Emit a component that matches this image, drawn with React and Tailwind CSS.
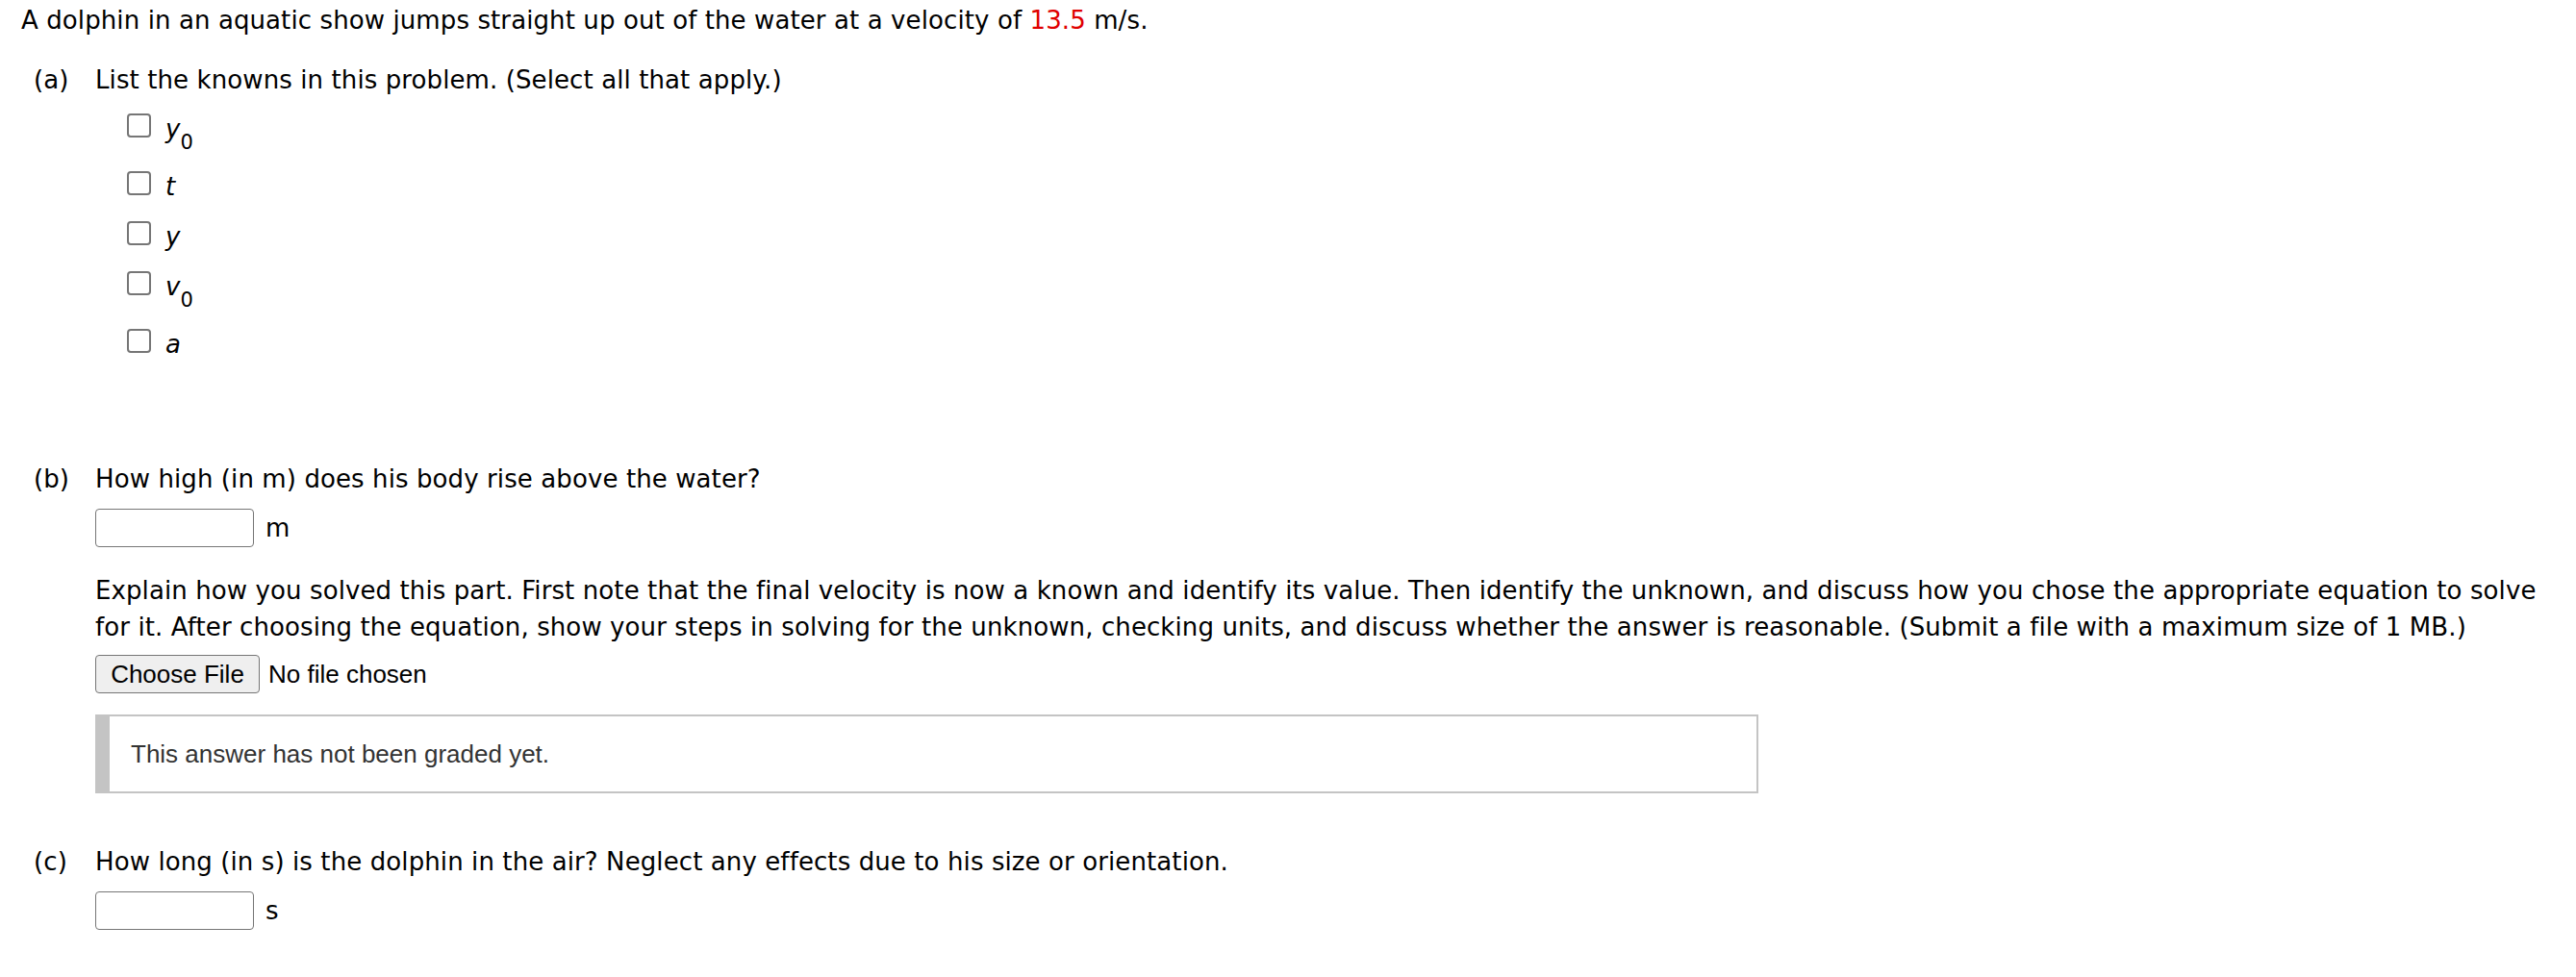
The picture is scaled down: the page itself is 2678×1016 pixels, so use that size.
import React from "react";

const Part = ({ label, children, className = "" }) => (
  <div className={`flex pl-[13px] ${className}`}>
    <div className="w-[64px] shrink-0 leading-[36px]">{label}</div>
    <div className="flex-1 min-w-0">{children}</div>
  </div>
);

const Known = ({ name, sub }) => (
  <div className={`flex items-start pl-[33px] ${sub ? "h-[60px]" : "h-[52px]"}`}>
    <div className="mt-[10px] w-[25px] h-[25px] shrink-0 rounded-[4px] border-2 border-[#767676] bg-white" />
    <span className="ml-[15px] leading-[52px] italic">
      {name}
      {sub && <span className="not-italic text-[21px] leading-none align-[-12px]">{sub}</span>}
    </span>
  </div>
);

const AnswerBox = ({ unit }) => (
  <div className="flex items-center mt-[13px]">
    <input
      type="text"
      className="w-[165px] h-[40px] rounded-[4px] border-[1.5px] border-[#767676] bg-white px-2 outline-none"
    />
    <span className="ml-[12px]">{unit}</span>
  </div>
);

export default function App() {
  return (
    <div className="min-h-screen bg-white text-black font-['DejaVu_Sans',Verdana,sans-serif] text-[26px] tracking-[0.1px] pl-[22px] pr-[38px] pt-[3px]">
      <p className="leading-[36px]">
        A dolphin in an aquatic show jumps straight up out of the water at a velocity of{" "}
        <span className="text-[#e00000]">13.5</span> m/s.
      </p>

      <Part label="(a)" className="mt-[26px]">
        <p className="leading-[36px]">List the knowns in this problem. (Select all that apply.)</p>
        <div className="mt-[7px]">
          <Known name="y" sub="0" />
          <Known name="t" />
          <Known name="y" />
          <Known name="v" sub="0" />
          <Known name="a" />
        </div>
      </Part>

      <Part label="(b)" className="mt-[96px]">
        <p className="leading-[36px]">How high (in m) does his body rise above the water?</p>
        <AnswerBox unit="m" />

        <p className="mt-[26px] leading-[38px]">
          Explain how you solved this part. First note that the final velocity is now a known and identify its value. Then identify the unknown, and discuss how you chose the appropriate equation to solve for it. After choosing the equation, show your steps in solving for the unknown, checking units, and discuss whether the answer is reasonable. (Submit a file with a maximum size of 1 MB.)
        </p>

        <div className="mt-[10px] flex items-center font-['Liberation_Sans',Arial,sans-serif] text-[26px] tracking-normal">
          <button className="h-[40px] w-[171px] rounded-[4px] border-[1.5px] border-[#767676] bg-[#efefef] text-black">
            Choose File
          </button>
          <span className="ml-[9px]">No file chosen</span>
        </div>

        <div className="mt-[22px] w-[1729px] h-[82px] flex items-center border-2 border-l-[15px] border-[#c4c4c4] pl-[22px] font-['Liberation_Sans',Arial,sans-serif] text-[26px] tracking-normal text-[#333]">
          This answer has not been graded yet.
        </div>
      </Part>

      <Part label="(c)" className="mt-[53px]">
        <p className="leading-[36px]">How long (in s) is the dolphin in the air? Neglect any effects due to his size or orientation.</p>
        <AnswerBox unit="s" />
      </Part>
    </div>
  );
}
